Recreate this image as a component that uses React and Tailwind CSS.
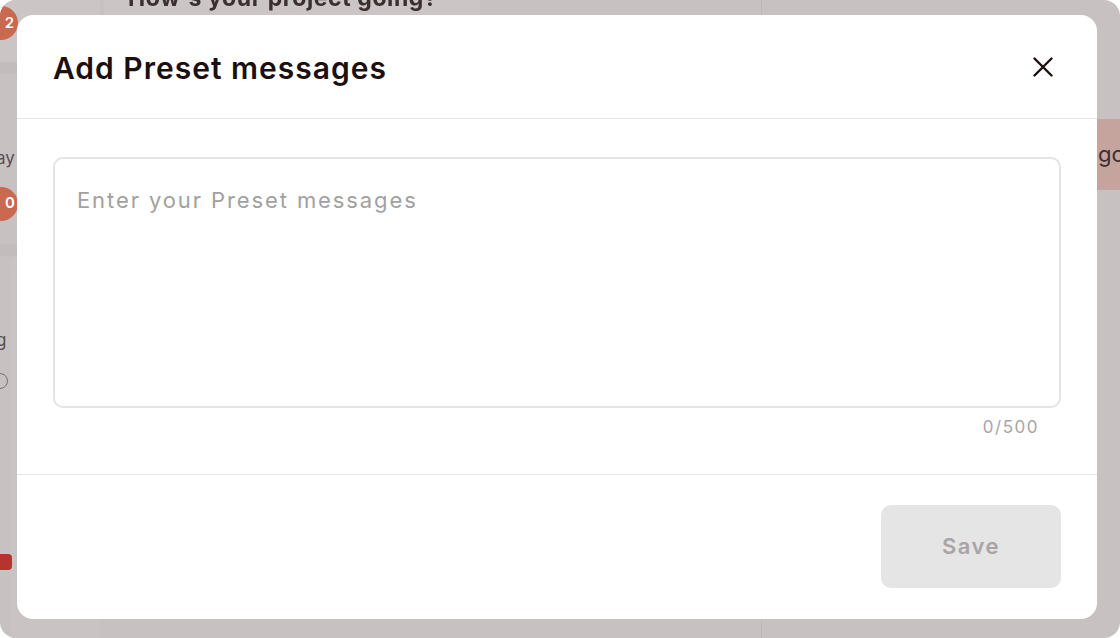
import React from 'react';

const font = { fontFamily: 'Inter, "Noto Sans", sans-serif' };

export default function App() {
  return (
    <div className="w-[1120px] h-[638px] bg-white" style={font}>
      <div className="relative w-full h-full rounded-[16px] overflow-hidden bg-[#c7c2c1]">
        {/* Blurred app behind the dialog */}
        <div className="flex h-full">
          {/* Conversations list */}
          <div className="w-[100px] shrink-0 flex flex-col">
            <div className="h-[62px] bg-[#cbc6c5] flex items-start pt-[6px]">
              <span className="w-[34px] h-[34px] -ml-[16px] rounded-full bg-[#c9694f] text-white text-[15px] font-semibold flex items-center justify-end pr-[4px]">2</span>
            </div>
            <div className="h-[12px] bg-[#c2bdbc]" />
            <div className="h-[170px] bg-[#c7c2c1]" />
            <div className="h-[12px] bg-[#c2bdbc]" />
            <div className="flex-1 ml-[10px] rounded-tl-[10px] bg-[#c9c4c3]" />
          </div>
          {/* Chat area */}
          <div className="w-[662px] shrink-0 flex flex-col border-r border-[#bdb8b7]">
            <div className="ml-[4px] w-[376px] h-[15px] bg-[#cbc6c5] flex items-end px-6 overflow-hidden">
              <span className="text-[23px] font-bold text-[#3b2f2f] leading-none whitespace-nowrap tracking-[0.6px] -translate-y-[5px] blur-[0.4px]">How's your project going?</span>
            </div>
          </div>
          {/* Right panel */}
          <div className="flex-1 min-w-0 flex flex-col pt-[119px]">
            <div className="h-[71px] bg-[#c4a49d] flex items-center pl-[336px] overflow-hidden">
              <span className="text-[22px] text-[#3b2f2f] whitespace-nowrap">going</span>
            </div>
          </div>
        </div>

        {/* Left edge bits peeking out */}
        <div className="absolute left-0 top-[140px] w-[17px] flex flex-col overflow-hidden">
          <span className="text-[17px] text-[#5a4e4e] whitespace-nowrap -ml-[4px] mt-[6px]">ay</span>
          <span className="mt-[15px] w-[34px] h-[34px] -ml-[16px] rounded-full bg-[#c9694f] text-white text-[15px] font-semibold flex items-center justify-end pr-[3px]">0</span>
          <span className="mt-[107px] text-[17px] text-[#5a4e4e] whitespace-nowrap -ml-[14px]">ng</span>
          <span className="mt-[20px] w-[16px] h-[16px] -ml-[8px] rounded-full border border-[#7a7070]" />
          <span className="mt-[165px] w-[20px] h-[16px] -ml-[8px] rounded-[4px] bg-[#b5342e]" />
        </div>

        {/* Dialog */}
        <div className="absolute left-[17px] top-[15px] w-[1080px] h-[604px] bg-white rounded-[16px] flex flex-col">
          <div className="h-[104px] flex items-center justify-between pl-[36px] pr-[44px] border-b border-[#e6e3e3]">
            <h2 className="text-[30px] font-semibold text-[#1e0f0f] tracking-[1px] pt-[3px]">Add Preset messages</h2>
            <button className="w-[20px] h-[20px] flex items-center justify-center">
              <svg width="20" height="20" viewBox="0 0 20 20" fill="none" stroke="#1e0f0f" strokeWidth="2.4" strokeLinecap="round">
                <path d="M1.5 1.5L18.5 18.5M18.5 1.5L1.5 18.5" />
              </svg>
            </button>
          </div>
          <div className="h-[356px] px-[36px] pt-[38px] border-b border-[#e6e3e3]">
            <textarea
              className="w-full h-[251px] resize-none rounded-[10px] border-2 border-[#e6e3e3] px-[22px] pt-[28px] pb-[20px] text-[22px] leading-[26px] tracking-[1.9px] outline-none placeholder:text-[#a3a0a0]"
              placeholder="Enter your Preset messages"
            />
            <div className="text-right pr-[22px] mt-[1px] text-[17px] tracking-[1.5px] text-[#a8a5a5]">0/500</div>
          </div>
          <div className="flex-1 flex justify-end items-start px-[36px] pt-[30px]">
            <button className="w-[180px] h-[83px] rounded-[10px] bg-[#e5e5e5] text-[22px] font-semibold tracking-[1.5px] text-[#aaa4a4]">
              Save
            </button>
          </div>
        </div>
      </div>
    </div>
  );
}
